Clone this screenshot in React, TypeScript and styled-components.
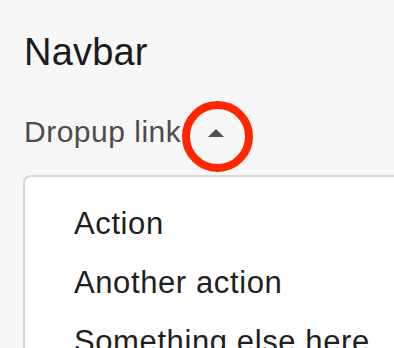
import React, { FC } from 'react';
import styled, { createGlobalStyle } from 'styled-components';

const GlobalStyle = createGlobalStyle`
  html, body {
    margin: 0;
    padding: 0;
    background: #f7f7f7;
  }
  body {
    font-family: "Liberation Sans", Arial, sans-serif;
  }
`;

const Page = styled.div`
  width: 394px;
  height: 348px;
  overflow: hidden;
  padding: 30px 0 0 24px;
  box-sizing: border-box;
`;

const Brand = styled.div`
  font-size: 38px;
  line-height: 44px;
  letter-spacing: 0.2px;
  color: #1b1b1b;
`;

const NavLink = styled.div`
  position: relative;
  margin-top: 38px;
  font-size: 30px;
  line-height: 40px;
  letter-spacing: 0.5px;
  color: #4d4d4d;
  white-space: nowrap;
`;

const Caret = styled.span`
  display: inline-block;
  width: 0;
  height: 0;
  margin-left: 27px;
  vertical-align: 5px;
  border-left: 8px solid transparent;
  border-right: 8px solid transparent;
  border-bottom: 8px solid #505050;
`;

const Highlight = styled.span`
  position: absolute;
  left: 158px;
  top: -11px;
  width: 71px;
  height: 71px;
  box-sizing: border-box;
  border: 8px solid #ff2600;
  border-radius: 50%;
`;

const Menu = styled.ul`
  list-style: none;
  margin: 23px 0 0 -1px;
  padding: 17px 0 0;
  width: 420px;
  height: 260px;
  box-sizing: border-box;
  background: #ffffff;
  border: 2px solid #d8d8d8;
  border-radius: 8px;
`;

const Item = styled.li`
  padding: 7px 0 7px 49px;
  font-size: 31px;
  line-height: 45px;
  letter-spacing: 0.6px;
  color: #1f1f1f;
  white-space: nowrap;
`;

const items = ['Action', 'Another action', 'Something else here'];

const App: FC = () => (
  <>
    <GlobalStyle />
    <Page>
      <Brand>Navbar</Brand>
      <NavLink>
        Dropup link
        <Caret />
        <Highlight />
      </NavLink>
      <Menu>
        {items.map((label) => (
          <Item key={label}>{label}</Item>
        ))}
      </Menu>
    </Page>
  </>
);

export default App;
